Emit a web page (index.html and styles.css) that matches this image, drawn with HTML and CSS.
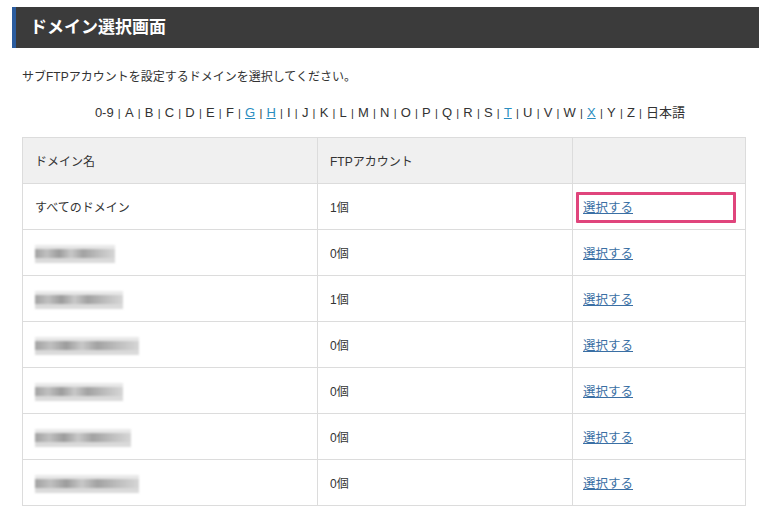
FILE: index.html
```html
<!DOCTYPE html>
<html lang="ja">
<head>
<meta charset="utf-8">
<link rel="stylesheet" href="styles.css">
</head>
<body>
<div class="page">
  <h1 class="title">ドメイン選択画面</h1>
  <div class="content">
    <p class="desc">サブFTPアカウントを設定するドメインを選択してください。</p>
    <p class="alpha">0-9<span class="sep">|</span>A<span class="sep">|</span>B<span class="sep">|</span>C<span class="sep">|</span>D<span class="sep">|</span>E<span class="sep">|</span>F<span class="sep">|</span><a href="#">G</a><span class="sep">|</span><a href="#">H</a><span class="sep">|</span>I<span class="sep">|</span>J<span class="sep">|</span>K<span class="sep">|</span>L<span class="sep">|</span>M<span class="sep">|</span>N<span class="sep">|</span>O<span class="sep">|</span>P<span class="sep">|</span>Q<span class="sep">|</span>R<span class="sep">|</span>S<span class="sep">|</span><a href="#">T</a><span class="sep">|</span>U<span class="sep">|</span>V<span class="sep">|</span>W<span class="sep">|</span><a href="#">X</a><span class="sep">|</span>Y<span class="sep">|</span>Z<span class="sep">|</span>日本語</p>
    <table class="domains">
      <colgroup><col class="c1"><col class="c2"><col class="c3"></colgroup>
      <thead>
        <tr><th>ドメイン名</th><th>FTPアカウント</th><th></th></tr>
      </thead>
      <tbody>
        <tr><td>すべてのドメイン</td><td>1個</td><td class="act"><a href="#">選択する</a><span class="mark"></span></td></tr>
        <tr><td><span class="blur w80"></span></td><td>0個</td><td class="act"><a href="#">選択する</a></td></tr>
        <tr><td><span class="blur w88"></span></td><td>1個</td><td class="act"><a href="#">選択する</a></td></tr>
        <tr><td><span class="blur w104"></span></td><td>0個</td><td class="act"><a href="#">選択する</a></td></tr>
        <tr><td><span class="blur w88"></span></td><td>0個</td><td class="act"><a href="#">選択する</a></td></tr>
        <tr><td><span class="blur w96"></span></td><td>0個</td><td class="act"><a href="#">選択する</a></td></tr>
        <tr><td><span class="blur w104"></span></td><td>0個</td><td class="act"><a href="#">選択する</a></td></tr>
      </tbody>
    </table>
  </div>
</div>
</body>
</html>
```
FILE: styles.css
```css
html, body {
  margin: 0;
  padding: 0;
  background: #fff;
}
body {
  font-family: "Liberation Sans", "Noto Sans CJK JP", sans-serif;
  color: #333;
  font-size: 12px;
}
.page {
  padding: 7px 9px 0 12px;
}
.title {
  margin: 0;
  height: 41px;
  line-height: 41px;
  background: #3b3b3b;
  border-left: 4px solid #2b5c9e;
  color: #fff;
  font-size: 17px;
  font-weight: bold;
  padding-left: 14px;
  box-sizing: border-box;
}
.content {
  padding: 0 13px 0 10px;
}
.desc {
  margin: 20px 0 0;
  line-height: 18px;
  font-size: 12px;
}
.alpha {
  margin: 18px 0 0;
  line-height: 18px;
  text-align: center;
  font-size: 13px;
  padding-left: 12px;
}
.alpha .sep {
  margin: 0 4.2px;
  font-size: 11px;
}
.alpha a {
  color: #2a8dc0;
  text-decoration: underline;
}
.domains {
  margin-top: 15px;
  width: 100%;
  border-collapse: collapse;
  table-layout: fixed;
  border: 1px solid #dcdcdc;
}
.c1 { width: 295px; }
.c2 { width: 255px; }
.domains th,
.domains td {
  height: 46px;
  padding: 0 12px;
  text-align: left;
  font-weight: normal;
  border: 1px solid #dcdcdc;
  font-size: 12px;
  box-sizing: border-box;
}
.domains th {
  background: #f0f0f0;
}
.domains td.act {
  padding-left: 10px;
  position: relative;
}
.domains td.act a {
  color: #3a6fa4;
  text-decoration: underline;
  font-size: 12.5px;
}
.mark {
  position: absolute;
  left: 3px;
  right: 9px;
  top: 8px;
  bottom: 6px;
  border: 3px solid #e0457c;
  border-radius: 1px;
}
.blur {
  display: inline-block;
  vertical-align: middle;
  height: 9px;
  background: linear-gradient(90deg, #a2a2a2 0%, #c0c0c0 15%, #9c9c9c 30%, #c8c8c8 45%, #a2a2a2 60%, #bebebe 80%, #d6d6d6 100%);
  filter: blur(0.8px);
  box-shadow: 0 5px 0 #dadada, 0 -4px 0 #e8e8e8;
}
.w80 { width: 80px; }
.w88 { width: 88px; }
.w96 { width: 96px; }
.w104 { width: 104px; }
```
